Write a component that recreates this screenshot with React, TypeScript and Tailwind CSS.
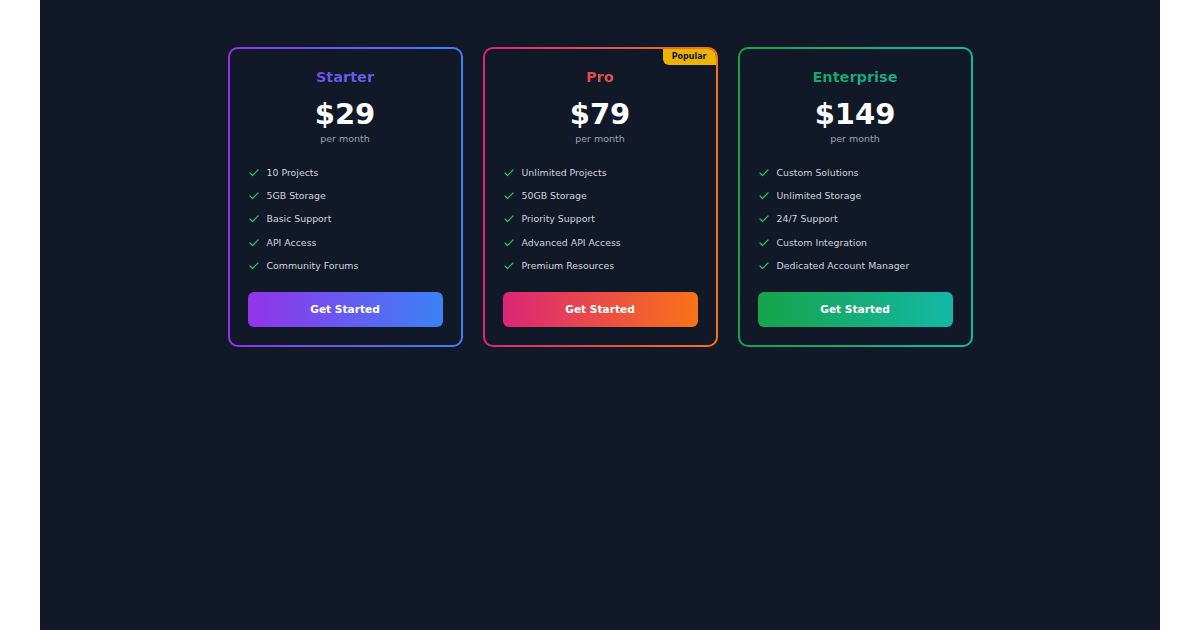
import React from 'react';

interface Plan {
  name: string;
  price: string;
  features: string[];
  gradient: string;
  popular?: boolean;
}

const plans: Plan[] = [
  {
    name: 'Starter',
    price: '$29',
    features: ['10 Projects', '5GB Storage', 'Basic Support', 'API Access', 'Community Forums'],
    gradient: 'from-[#9333ea] to-[#3b82f6]',
  },
  {
    name: 'Pro',
    price: '$79',
    features: ['Unlimited Projects', '50GB Storage', 'Priority Support', 'Advanced API Access', 'Premium Resources'],
    gradient: 'from-[#db2777] to-[#f97316]',
    popular: true,
  },
  {
    name: 'Enterprise',
    price: '$149',
    features: ['Custom Solutions', 'Unlimited Storage', '24/7 Support', 'Custom Integration', 'Dedicated Account Manager'],
    gradient: 'from-[#16a34a] to-[#14b8a6]',
  },
];

const CheckIcon = () => (
  <svg width="12" height="12" viewBox="0 0 24 24" fill="none" stroke="#22c55e" strokeWidth="2.4" strokeLinecap="round" strokeLinejoin="round" className="shrink-0">
    <path d="M20 6 9 17l-5-5" />
  </svg>
);

const PlanCard: React.FC<{ plan: Plan }> = ({ plan }) => {
  return (
    <div className={`rounded-[10px] p-[2px] bg-linear-to-r/srgb ${plan.gradient}`}>
      <div className="relative overflow-hidden rounded-[8px] bg-[#111827] px-[18px] pt-[18px] pb-[18px]">
        {plan.popular && (
          <div className="absolute top-0 right-0 rounded-bl-md bg-[#eab308] px-[9px] py-[3px] text-[8px] leading-[10px] font-bold text-[#111827]">
            Popular
          </div>
        )}
        <h3 className={`bg-linear-to-r/srgb ${plan.gradient} bg-clip-text text-center text-[14.5px] leading-5 font-bold text-transparent`}>
          {plan.name}
        </h3>
        <div className="mt-[9px] text-center text-[29px] leading-9 font-bold text-white">{plan.price}</div>
        <div className="text-center text-[9.5px] leading-[14px] text-[#9ca3af]">per month</div>
        <ul className="mt-[19.5px] flex flex-col gap-[9.4px]">
          {plan.features.map((f) => (
            <li key={f} className="flex items-center gap-[7px] text-[9.4px] leading-[14px] text-[#d1d5db]">
              <CheckIcon />
              <span>{f}</span>
            </li>
          ))}
        </ul>
        <button className={`mt-[18.5px] h-[35px] w-full rounded-md bg-linear-to-r/srgb ${plan.gradient} pt-px text-[10.6px] font-bold text-white`}>
          Get Started
        </button>
      </div>
    </div>
  );
};

export default function App() {
  return (
    <div className="min-h-screen bg-white font-['DejaVu_Sans',sans-serif]">
      <div className="mx-auto h-[630px] w-[1120px] bg-[#111827] pt-[47px]">
        <div className="mx-auto grid w-[745px] grid-cols-3 gap-5">
          {plans.map((p) => (
            <PlanCard key={p.name} plan={p} />
          ))}
        </div>
      </div>
    </div>
  );
}
